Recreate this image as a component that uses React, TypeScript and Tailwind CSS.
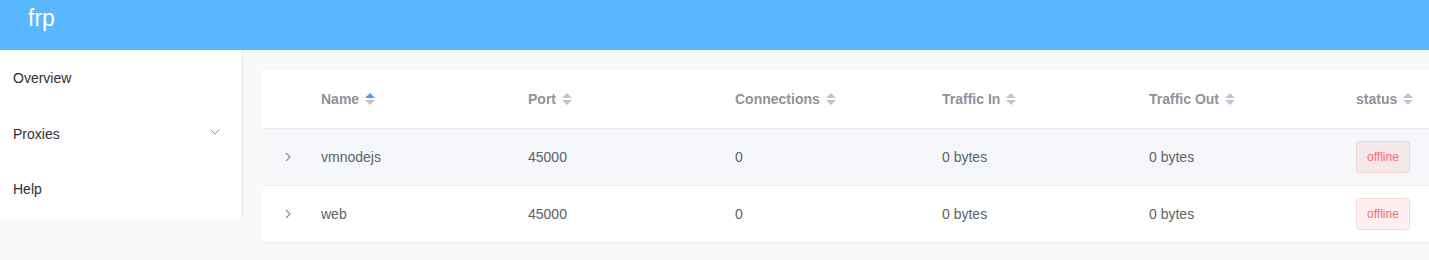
import React from "react";

const font = { fontFamily: '"Liberation Sans", Arial, Helvetica, sans-serif' };

function SortCaret({ active }: { active?: boolean }) {
  return (
    <span className="ml-[6px] inline-flex flex-col items-center gap-[2px]">
      <svg width="10" height="5" viewBox="0 0 10 5">
        <polygon points="0,5 5,0 10,5" fill={active ? "#409eff" : "#c0c4cc"} />
      </svg>
      <svg width="10" height="5" viewBox="0 0 10 5">
        <polygon points="0,0 10,0 5,5" fill="#c0c4cc" />
      </svg>
    </span>
  );
}

function ChevronRight() {
  return (
    <svg width="8" height="12" viewBox="0 0 8 12" fill="none">
      <path d="M2 2 L6 6 L2 10" stroke="#909399" strokeWidth="1.2" />
    </svg>
  );
}

const rows = [
  { name: "vmnodejs", port: "45000", conns: "0", tin: "0 bytes", tout: "0 bytes", hover: true },
  { name: "web", port: "45000", conns: "0", tin: "0 bytes", tout: "0 bytes", hover: false },
];

const grid = "grid grid-cols-[48px_207px_207px_207px_207px_207px_1fr]";

export default function App() {
  return (
    <div className="h-[260px] w-[1429px] overflow-hidden bg-[#f9f9f9]" style={font}>
      <header className="flex h-[50px] items-start bg-[#58b7ff] pl-[28px] pt-[7px]">
        <span className="text-[23px] leading-[23px] text-white">frp</span>
      </header>
      <div className="flex items-start">
        <nav className="w-[243px] shrink-0 border-r border-[#e6e6e6] bg-white">
          <div className="flex h-[56px] items-center pl-[13px] text-[14px] text-[#303133]">Overview</div>
          <div className="flex h-[56px] items-center justify-between pl-[13px] pr-[21px] text-[14px] text-[#303133]">
            <span>Proxies</span>
            <svg width="12" height="8" viewBox="0 0 12 8" fill="none" className="mb-[4px]">
              <path d="M1.5 1.5 L6 6 L10.5 1.5" stroke="#909399" strokeWidth="1" />
            </svg>
          </div>
          <div className="flex h-[55px] items-center pl-[13px] text-[14px] text-[#303133]">Help</div>
        </nav>
        <main className="min-w-0 flex-1 pl-[20px] pt-[20px]">
          <div className="bg-white text-[14px]">
            <div className={`${grid} h-[59px] items-center border-b border-[#ebeef5] font-bold text-[#909399]`}>
              <div />
              {["Name", "Port", "Connections", "Traffic In", "Traffic Out", "status"].map((h, i) => (
                <div key={h} className="flex items-center pl-[10px] whitespace-nowrap">
                  <span>{h}</span>
                  <SortCaret active={i === 0} />
                </div>
              ))}
            </div>
            {rows.map((r) => (
              <div
                key={r.name}
                className={`${grid} h-[57px] items-center border-b border-[#ebeef5] text-[#606266] ${r.hover ? "bg-[#f5f7fa]" : "bg-white"}`}
              >
                <div className="flex justify-center pl-[2px]">
                  <ChevronRight />
                </div>
                <div className="pl-[10px]">{r.name}</div>
                <div className="pl-[10px]">{r.port}</div>
                <div className="pl-[10px]">{r.conns}</div>
                <div className="pl-[10px]">{r.tin}</div>
                <div className="pl-[10px]">{r.tout}</div>
                <div className="pl-[10px]">
                  <span className="inline-flex h-[32px] items-center rounded-[4px] border border-[rgba(245,108,108,0.2)] bg-[rgba(245,108,108,0.1)] px-[10px] text-[12px] text-[#f56c6c]">
                    offline
                  </span>
                </div>
              </div>
            ))}
          </div>
        </main>
      </div>
    </div>
  );
}
